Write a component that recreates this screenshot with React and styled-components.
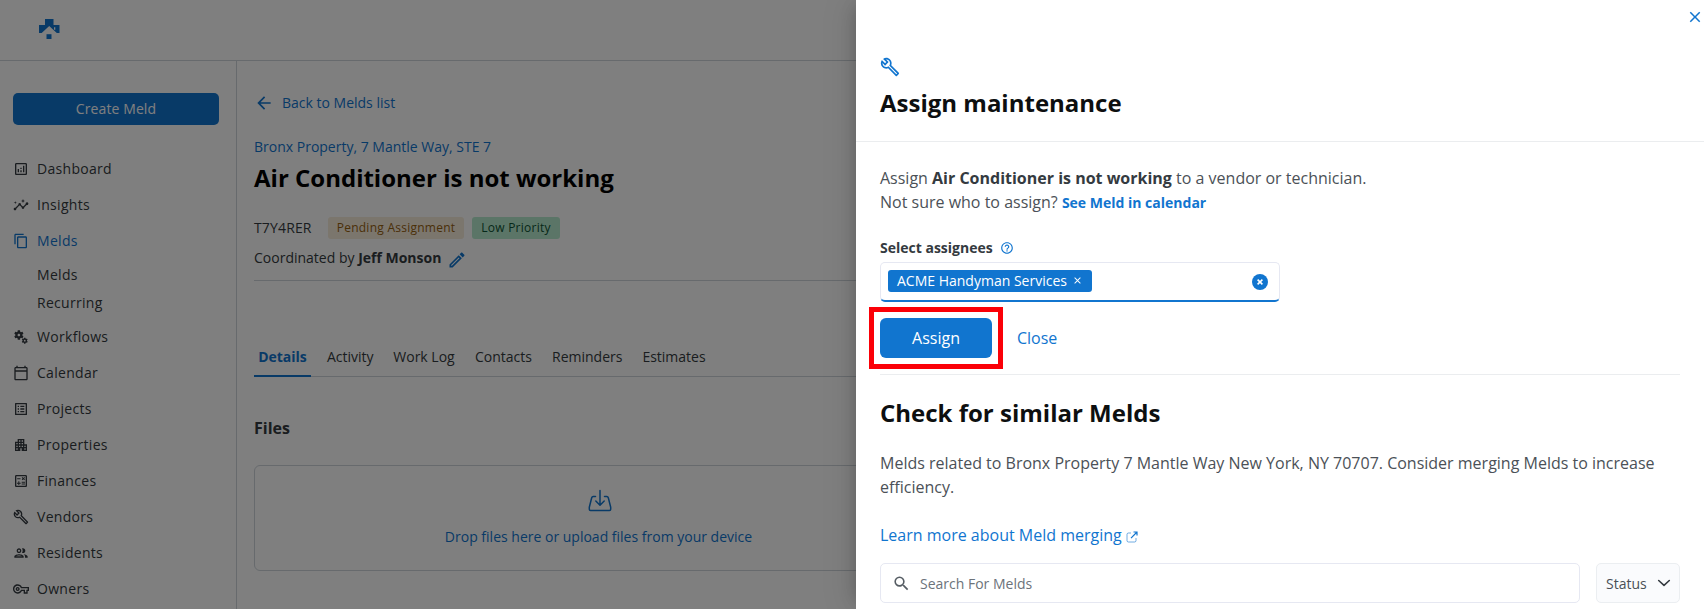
import React from "react";
import styled, { createGlobalStyle } from "styled-components";
import {
  MdOutlineAnalytics,
  MdInsights,
  MdContentCopy,
  MdMiscellaneousServices,
  MdOutlineCalendarToday,
  MdOutlineListAlt,
  MdApartment,
  MdOutlineCalculate,
  MdOutlineBuild,
  MdOutlinePeople,
  MdOutlineVpnKey,
  MdArrowBack,
  MdOutlineEdit,
  MdHelpOutline,
  MdClose,
  MdSearch,
} from "react-icons/md";

const BLUE = "#1175cf";

const GlobalStyle = createGlobalStyle`
  * { box-sizing: border-box; }
  html, body { height: 609px; overflow: hidden; }
  body {
    margin: 0;
    background: #fff;
    font-family: "Open Sans", "Noto Sans", sans-serif;
    font-size: 14px;
    color: #343a40;
  }
  svg { display: block; flex: none; }
  h1, h2, h3, p { margin: 0; }
  button { font: inherit; padding: 0; border: 0; background: none; }
`;

const Shell = styled.div`
  width: 1704px;
  height: 609px;
  overflow: hidden;
  position: relative;
`;

const Header = styled.header`
  height: 61px;
  border-bottom: 1px solid #ced4da;
  padding: 19px 0 0 39px;
`;

const Body = styled.div`
  display: flex;
  height: 548px;
`;

const Sidebar = styled.aside`
  width: 237px;
  flex: none;
  border-right: 1px solid #ced4da;
  padding: 32px 17px 0 13px;
  overflow: hidden;
`;

const CreateButton = styled.button`
  display: block;
  width: 206px;
  height: 32px;
  padding-bottom: 2px;
  border-radius: 5px;
  background: ${BLUE};
  color: #fff;
  letter-spacing: 0.1px;
  margin-bottom: 26px;
`;

const NavItem = styled.div`
  display: flex;
  align-items: center;
  height: 36px;
  gap: 8px;
  font-weight: 500;
  letter-spacing: 0.3px;
  color: ${(p) => (p.$active ? BLUE : "#343a40")};
`;

const NavIcon = styled.span`
  width: 16px;
  display: flex;
  justify-content: center;
`;

const NavLabel = styled.span`
  padding-bottom: 2px;
`;

const SubNav = styled.div`
  padding: 2px 0 2px 24px;
`;

const SubNavItem = styled.div`
  height: 28px;
  line-height: 27px;
  font-weight: 500;
  letter-spacing: 0.3px;
`;

const Main = styled.main`
  flex: 1;
  padding: 31px 24px 0 17px;
`;

const BackLink = styled.div`
  display: flex;
  align-items: center;
  gap: 8px;
  height: 22px;
  color: ${BLUE};
`;

const BackLabel = styled.span`
  padding-bottom: 2px;
`;

const Address = styled.div`
  margin-top: 22px;
  line-height: 22px;
  color: ${BLUE};
`;

const MeldTitle = styled.h1`
  font-size: 24px;
  font-weight: 700;
  line-height: 32px;
  margin-top: 4px;
  color: #000;
`;

const MetaRow = styled.div`
  display: flex;
  align-items: center;
  height: 22px;
  margin-top: 23px;
`;

const MeldCode = styled.span`
  width: 74px;
  padding-bottom: 2px;
  letter-spacing: 0.15px;
`;

const Badge = styled.span`
  height: 22px;
  line-height: 21px;
  width: ${(p) => p.$width}px;
  text-align: center;
  border-radius: 3px;
  font-size: 12px;
  font-weight: 500;
  letter-spacing: 0.25px;
  margin-right: 8px;
  white-space: nowrap;
  background: ${(p) => (p.$tone === "warn" ? "#f7ecdb" : "#b7ebcf")};
  color: ${(p) => (p.$tone === "warn" ? "#95600f" : "#0c5132")};
`;

const Coordinator = styled.div`
  display: flex;
  align-items: center;
  height: 22px;
  margin: 7px 0 12px;
  white-space: pre;
  b { font-weight: 700; }
  svg { margin: 6px 0 0 6px; color: ${BLUE}; }
`;

const Rule = styled.div`
  height: 1px;
  background: ${(p) => p.$color};
  margin-top: ${(p) => p.$top || 0}px;
`;

const Tabs = styled.div`
  display: flex;
  margin-top: 61px;
  height: 35px;
  border-bottom: 1px solid #ced4da;
`;

const Tab = styled.div`
  height: 35px;
  line-height: 29px;
  width: ${(p) => p.$width}px;
  margin-right: ${(p) => p.$gap}px;
  text-align: center;
  white-space: nowrap;
  font-weight: ${(p) => (p.$active ? 700 : 400)};
  color: ${(p) => (p.$active ? BLUE : "#343a40")};
  border-bottom: 2px solid ${(p) => (p.$active ? BLUE : "transparent")};
`;

const SectionTitle = styled.h3`
  font-size: 16px;
  font-weight: 700;
  line-height: 24px;
  margin-top: 39px;
`;

const DropZone = styled.div`
  width: 692px;
  height: 106px;
  margin-top: 25px;
  border: 1px solid #ced4da;
  border-radius: 6px;
  display: flex;
  flex-direction: column;
  align-items: center;
  padding-top: 23px;
  gap: 13px;
  line-height: 22px;
  color: ${BLUE};
`;

const DropLabel = styled.span`
  margin-right: 3px;
`;

const Backdrop = styled.div`
  position: absolute;
  inset: 0;
  background: rgba(0, 0, 0, 0.5);
`;

const Drawer = styled.section`
  position: absolute;
  top: 0;
  right: 0;
  width: 848px;
  height: 609px;
  background: #fff;
  box-shadow: -6px 0 16px -8px rgba(0, 0, 0, 0.24), -9px 0 28px rgba(0, 0, 0, 0.08);
`;

const DrawerHeader = styled.div`
  height: 142px;
  border-bottom: 1px solid #ebedef;
  padding: 8px 0 0 24px;
`;

const DrawerClose = styled.div`
  display: flex;
  justify-content: flex-end;
  height: 49px;
  color: ${BLUE};
`;

const DrawerTitle = styled.h2`
  font-size: 24px;
  font-weight: 700;
  line-height: 32px;
  color: #0d0f10;
  margin-top: ${(p) => p.$top}px;
`;

const DrawerBody = styled.div`
  padding: 24px 24px 0;
`;

const Copy = styled.p`
  font-size: 16px;
  line-height: 24px;
  color: #4b5157;
  margin-top: ${(p) => p.$top || 0}px;
  b { font-weight: 700; color: #343a40; }
`;

const InlineLink = styled.span`
  font-size: 14px;
  font-weight: 700;
  line-height: 1;
  color: ${BLUE};
`;

const FieldLabel = styled.div`
  display: flex;
  align-items: center;
  gap: 7px;
  height: 22px;
  margin-top: 23px;
  font-weight: 700;
  svg { color: ${BLUE}; }
`;

const LabelText = styled.span`
  padding-bottom: 2px;
`;

const AssigneeField = styled.div`
  width: 400px;
  height: 40px;
  margin-top: 3px;
  border: 1px solid #e6e8f2;
  border-bottom: 2px solid ${BLUE};
  border-radius: 5px;
  display: flex;
  align-items: center;
  justify-content: space-between;
  padding: 0 11px 0 7px;
`;

const Chip = styled.span`
  display: flex;
  align-items: center;
  gap: 5px;
  width: 204px;
  height: 22px;
  padding: 0 0 1px 9px;
  border-radius: 3px;
  background: ${BLUE};
  color: #fff;
  white-space: nowrap;
  margin-bottom: 1px;
`;

const ClearButton = styled.button`
  width: 16px;
  height: 16px;
  border-radius: 50%;
  background: ${BLUE};
  display: grid;
  place-items: center;
  margin-top: 1px;
`;

const Actions = styled.div`
  display: flex;
  align-items: center;
  margin: 5px 0 0 -11px;
`;

const Highlight = styled.div`
  width: 134px;
  height: 62px;
  border: 5px solid #fb0007;
  padding: 6px;
`;

const AssignButton = styled.button`
  width: 112px;
  height: 40px;
  border-radius: 6px;
  background: ${BLUE};
  color: #fff;
  font-size: 16px;
`;

const CloseLink = styled.button`
  margin-left: 14px;
  font-size: 16px;
  color: ${BLUE};
`;

const LearnLink = styled.div`
  display: flex;
  align-items: center;
  gap: 4px;
  margin-top: 24px;
  font-size: 16px;
  line-height: 24px;
  color: ${BLUE};
  svg { margin-top: 3px; }
`;

const SearchRow = styled.div`
  display: flex;
  gap: 16px;
  margin-top: 16px;
`;

const SearchBox = styled.div`
  flex: 1;
  height: 40px;
  border: 1px solid #e6e8f2;
  border-radius: 5px;
  display: flex;
  align-items: center;
  gap: 9px;
  padding-left: 11px;
  color: #6c737a;
  svg { color: #565d64; margin-top: 1px; }
`;

const StatusSelect = styled.div`
  width: 84px;
  height: 40px;
  border: 1px solid #ebeef1;
  border-radius: 5px;
  background: #fafbfd;
  display: flex;
  align-items: center;
  justify-content: space-between;
  padding: 0 8px 0 9px;
  color: #495057;
`;

const Logo = () => (
  <svg width="21" height="20" viewBox="0 0 21 20" fill={BLUE}>
    <path d="M6 0h8.500v6h6v8h-2.700L10.200 7 2.700 14H0V6h6z" />
    <path d="M7.500 15.200h5V20h-5z" />
    <path d="M15 8.200h1.300v2.600H15z" fill="#fff" />
  </svg>
);

const DropIcon = () => (
  <svg width="24" height="24" viewBox="0 0 24 24" fill="none" stroke={BLUE} strokeWidth="1.5" strokeLinecap="round" strokeLinejoin="round">
    <path d="M12 1.500v14.300M7.800 12 12 16.200 16.200 12" />
    <path d="M7.500 7.500H5.200c-.8 0-1.300.5-1.500 1.200L1.300 18.200v2.100c0 .8.5 1.200 1.200 1.200h19c.7 0 1.200-.4 1.200-1.200v-2.100L20.300 8.700C20.100 8 19.600 7.500 18.800 7.500h-2.300" />
  </svg>
);

const ExternalIcon = () => (
  <svg width="12" height="12" viewBox="0 0 12 12" fill="none" stroke={BLUE}>
    <path d="M5 2H2.500A1.500 1.500 0 0 0 1 3.500v6A1.500 1.500 0 0 0 2.500 11h6A1.500 1.500 0 0 0 10 9.500V7" opacity=".6" />
    <path d="M7.500 1H11v3.500M11 1 5 7.200" strokeWidth="1.200" />
  </svg>
);

const ClearIcon = () => (
  <svg width="6" height="6" viewBox="0 0 6 6" stroke="#fff" strokeWidth="1.600">
    <path d="M.6.6 5.400 5.400M5.400.6.6 5.400" />
  </svg>
);

const Chevron = () => (
  <svg width="14" height="8" viewBox="0 0 14 8" fill="none" stroke="#343a40" strokeWidth="1.600" strokeLinecap="round" strokeLinejoin="round">
    <path d="M1.700 1.500 7 6.300l5.300-4.800" />
  </svg>
);

const topNav = [
  ["Dashboard", MdOutlineAnalytics],
  ["Insights", MdInsights],
  ["Melds", MdContentCopy, true],
];

const bottomNav = [
  ["Workflows", MdMiscellaneousServices],
  ["Calendar", MdOutlineCalendarToday],
  ["Projects", MdOutlineListAlt],
  ["Properties", MdApartment],
  ["Finances", MdOutlineCalculate],
  ["Vendors", MdOutlineBuild],
  ["Residents", MdOutlinePeople],
  ["Owners", MdOutlineVpnKey],
];

const tabs = [
  ["Details", 57, 16, true],
  ["Activity", 46, 20],
  ["Work Log", 62, 20],
  ["Contacts", 57, 20],
  ["Reminders", 70, 20],
  ["Estimates", 64, 20],
];

const renderNav = ([label, Icon, active]) => (
  <NavItem key={label} $active={active}>
    <NavIcon><Icon size={16} /></NavIcon>
    <NavLabel>{label}</NavLabel>
  </NavItem>
);

export default function App() {
  return (
    <>
      <GlobalStyle />
      <Shell>
        <Header><Logo /></Header>
        <Body>
          <Sidebar>
            <CreateButton>Create Meld</CreateButton>
            {topNav.map(renderNav)}
            <SubNav>
              <SubNavItem>Melds</SubNavItem>
              <SubNavItem>Recurring</SubNavItem>
            </SubNav>
            {bottomNav.map(renderNav)}
          </Sidebar>
          <Main>
            <BackLink>
              <MdArrowBack size={20} />
              <BackLabel>Back to Melds list</BackLabel>
            </BackLink>
            <Address>Bronx Property, 7 Mantle Way, STE 7</Address>
            <MeldTitle>Air Conditioner is not working</MeldTitle>
            <MetaRow>
              <MeldCode>T7Y4RER</MeldCode>
              <Badge $tone="warn" $width={136}>Pending Assignment</Badge>
              <Badge $tone="ok" $width={88}>Low Priority</Badge>
            </MetaRow>
            <Coordinator>
              Coordinated by <b>Jeff Monson</b>
              <MdOutlineEdit size={20} />
            </Coordinator>
            <Rule $color="#ced4da" />
            <Tabs>
              {tabs.map(([label, width, gap, active]) => (
                <Tab key={label} $width={width} $gap={gap} $active={active}>{label}</Tab>
              ))}
            </Tabs>
            <SectionTitle>Files</SectionTitle>
            <DropZone>
              <DropIcon />
              <DropLabel>Drop files here or upload files from your device</DropLabel>
            </DropZone>
          </Main>
        </Body>
        <Backdrop />
        <Drawer>
          <DrawerHeader>
            <DrawerClose><MdClose size={18} /></DrawerClose>
            <MdOutlineBuild size={20} color={BLUE} />
            <DrawerTitle $top={10}>Assign maintenance</DrawerTitle>
          </DrawerHeader>
          <DrawerBody>
            <Copy>
              Assign <b>Air Conditioner is not working</b> to a vendor or technician.
              <br />
              Not sure who to assign? <InlineLink>See Meld in calendar</InlineLink>
            </Copy>
            <FieldLabel>
              <LabelText>Select assignees</LabelText>
              <MdHelpOutline size={14} />
            </FieldLabel>
            <AssigneeField>
              <Chip>ACME Handyman Services <MdClose size={11} /></Chip>
              <ClearButton><ClearIcon /></ClearButton>
            </AssigneeField>
            <Actions>
              <Highlight><AssignButton>Assign</AssignButton></Highlight>
              <CloseLink>Close</CloseLink>
            </Actions>
            <Rule $color="#ebedef" $top={5} />
            <DrawerTitle $top={22}>Check for similar Melds</DrawerTitle>
            <Copy $top={22}>
              Melds related to Bronx Property 7 Mantle Way New York, NY 70707. Consider merging Melds to increase efficiency.
            </Copy>
            <LearnLink>Learn more about Meld merging <ExternalIcon /></LearnLink>
            <SearchRow>
              <SearchBox><MdSearch size={19} />Search For Melds</SearchBox>
              <StatusSelect>Status <Chevron /></StatusSelect>
            </SearchRow>
          </DrawerBody>
        </Drawer>
      </Shell>
    </>
  );
}
